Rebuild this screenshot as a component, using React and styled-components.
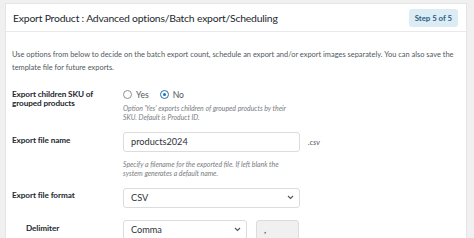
import React from "react";
import styled, { createGlobalStyle } from "styled-components";

const GlobalStyle = createGlobalStyle`
  html, body {
    margin: 0;
    padding: 0;
    background: #f0f0f1;
    font-family: Lato, "Noto Sans", sans-serif;
    color: #1d2327;
    overflow: hidden;
  }
`;

const Page = styled.div`
  padding: 3px 7px 0 5px;
`;

const Panel = styled.div`
  background: #fff;
  border: 1px solid #e4e5e7;
  border-bottom: none;
  height: 240px;
`;

const Header = styled.div`
  display: flex;
  align-items: center;
  justify-content: space-between;
  height: 27px;
  padding: 0 8px 0 7px;
  border-bottom: 1px solid #e8e9eb;
`;

const Title = styled.h2`
  margin: 0;
  font-size: 10.4px;
  letter-spacing: -0.2px;
  font-weight: 400;
  color: #23282d;
`;

const Badge = styled.span`
  background: #dcecf5;
  color: #2c5f80;
  font-size: 7.8px;
  font-weight: 700;
  padding: 4px 6px;
  border-radius: 3px;
`;

const Body = styled.div`
  padding: 17px 6px 0 6px;
`;

const Intro = styled.p`
  margin: 0 0 15px;
  font-size: 7.45px;
  line-height: 12.8px;
  color: #50575e;
`;

const Row = styled.div`
  display: flex;
  align-items: flex-start;
  margin-bottom: ${(p) => p.gap || 0}px;
`;

const Label = styled.div`
  width: ${(p) => (p.indent ? 97 : 111)}px;
  padding-left: ${(p) => (p.indent ? 14 : 0)}px;
  padding-top: ${(p) => p.top || 0}px;
  font-size: 8.2px;
  letter-spacing: -0.1px;
  line-height: 9.6px;
  font-weight: 700;
  color: #23282d;
  flex-shrink: 0;
`;

const Field = styled.div`
  display: flex;
  flex-direction: column;
`;

const Inline = styled.div`
  display: flex;
  align-items: center;
  gap: ${(p) => p.gap || 0}px;
`;

const RadioLabel = styled.label`
  display: flex;
  align-items: center;
  height: 10px;
  gap: 4px;
  margin-right: 11px;
  font-size: 8.6px;
  color: #50575e;
`;

const Radio = styled.span`
  width: 7px;
  height: 7px;
  border-radius: 50%;
  border: 1px solid ${(p) => (p.checked ? "#2271b1" : "#8c8f94")};
  display: flex;
  align-items: center;
  justify-content: center;
  &::after {
    content: "";
    width: 3px;
    height: 3px;
    border-radius: 50%;
    background: ${(p) => (p.checked ? "#2271b1" : "transparent")};
  }
`;

const Hint = styled.p`
  margin: ${(p) => p.top || 0}px 0 0;
  font-size: 6.9px;
  line-height: 9px;
  font-style: italic;
  color: #787c82;
  width: 170px;
`;

const Input = styled.div`
  box-sizing: border-box;
  width: ${(p) => p.w}px;
  height: 20px;
  border: 1px solid #dcdcde;
  border-radius: 3px;
  background: ${(p) => (p.muted ? "#f0f0f1" : "#fff")};
  display: flex;
  align-items: center;
  justify-content: space-between;
  padding: 0 5px 0 7px;
  font-size: 9.2px;
  color: #2c3338;
`;

const Suffix = styled.span`
  font-size: 7.6px;
  font-style: italic;
  color: #50575e;
`;

const Chevron = () => (
  <svg width="7" height="5" viewBox="0 0 7 5">
    <path d="M1 1l2.5 2.5L6 1" fill="none" stroke="#50575e" strokeWidth="1.1" />
  </svg>
);

export default function App() {
  return (
    <Page>
      <GlobalStyle />
      <Panel>
        <Header>
          <Title>Export Product : Advanced options/Batch export/Scheduling</Title>
          <Badge>Step 5 of 5</Badge>
        </Header>
        <Body>
          <Intro>
            Use options from below to decide on the batch export count, schedule an export and/or export images separately. You can also save the template file for future exports.
          </Intro>

          <Row gap={10}>
            <Label>
              Export children SKU of
              <br />
              grouped products
            </Label>
            <Field>
              <Inline>
                <RadioLabel>
                  <Radio />
                  Yes
                </RadioLabel>
                <RadioLabel>
                  <Radio checked />
                  No
                </RadioLabel>
              </Inline>
              <Hint top={4}>
                Option 'Yes' exports children of grouped products by their SKU. Default is Product ID.
              </Hint>
            </Field>
          </Row>

          <Row gap={10}>
            <Label top={4}>Export file name</Label>
            <Field>
              <Inline gap={8}>
                <Input w={177}>products2024</Input>
                <Suffix>.csv</Suffix>
              </Inline>
              <Hint top={8}>
                Specify a filename for the exported file. If left blank the system generates a default name.
              </Hint>
            </Field>
          </Row>

          <Row gap={12}>
            <Label top={3}>Export file format</Label>
            <Input w={177}>
              CSV
              <Chevron />
            </Input>
          </Row>

          <Row>
            <Label indent top={4}>Delimiter</Label>
            <Inline gap={9}>
              <Input w={124}>
                Comma
                <Chevron />
              </Input>
              <Input w={43} muted>,</Input>
            </Inline>
          </Row>
        </Body>
      </Panel>
    </Page>
  );
}
